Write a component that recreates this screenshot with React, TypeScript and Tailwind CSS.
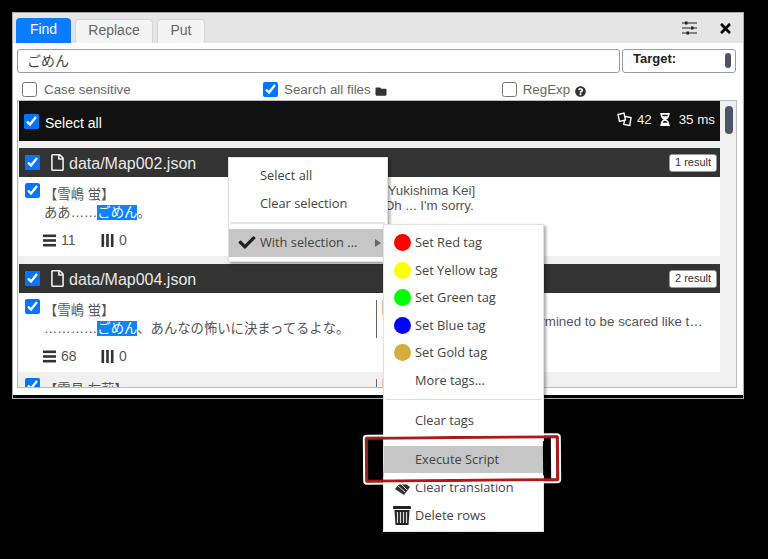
import React from "react";
import { FaCheck, FaFolder, FaHourglassHalf, FaQuestionCircle, FaRegFile, FaTimes } from "react-icons/fa";

const cjk = { fontFamily: '"Liberation Sans","Noto Sans CJK JP",sans-serif' };

function Box({ checked = false }: { checked?: boolean }) {
  return <input type="checkbox" checked={checked} readOnly className="m-0 h-[15px] w-[15px] shrink-0 accent-[#0075ff]" />;
}

function Hit() {
  return <span className="bg-[#0a84ff] text-white">ごめん</span>;
}

function Lines() {
  return (
    <svg width="13" height="13" viewBox="0 0 13 13" fill="#333">
      <rect x="0" y="0.5" width="13" height="2.6" />
      <rect x="0" y="5.2" width="13" height="2.6" />
      <rect x="0" y="9.9" width="13" height="2.6" />
    </svg>
  );
}

function Counts({ lines }: { lines: string }) {
  return (
    <div className="-ml-[1px] mt-[10px] flex h-[16px] items-center text-[14px] text-[#555]">
      <Lines />
      <span className="ml-[5px] w-[40px]">{lines}</span>
      <span className="rotate-90 leading-none"><Lines /></span>
      <span className="ml-[5px]">0</span>
    </div>
  );
}

function FileHeader({ name, count }: { name: string; count: string }) {
  return (
    <div className="flex h-[29px] items-center bg-[#333] pl-[6px] pr-[3px] text-white">
      <Box checked />
      <FaRegFile className="ml-[10px] h-[17px] w-[15px] text-[#eee]" />
      <span className="ml-[4px] mt-[2px] text-[16px] text-[#e8e8e8]">{name}</span>
      <span className="ml-auto flex h-[18px] w-[48px] items-center justify-center rounded-[3px] border border-[#999] bg-white text-[11px] text-[#333]">{count}</span>
    </div>
  );
}

function Row({ text, tr, lines, name = "【雪嶋 蛍】", grey = false }: { text: React.ReactNode; tr: React.ReactNode; lines: string; name?: string; grey?: boolean }) {
  return (
    <div className={`flex h-[79px] pl-[6px] pt-[6px] ${grey ? "bg-[#f0f0f0]" : "bg-white"}`}>
      <Box checked />
      <div className="ml-[4px] w-[332px] shrink-0 text-[13.33px] leading-[18px] text-[#555]" style={cjk}>
        <div className="mt-[3px]">{name}</div>
        <div>{text}</div>
        <Counts lines={lines} />
      </div>
      <div className="mt-[1px] flex h-[38px] w-[6px] shrink-0 border-l border-[#666]">
        <div className="ml-[5px] h-[15px] w-[3px] shrink-0 bg-[#f5c08a]" />
      </div>
      <div className="ml-[2px] w-[322px] truncate text-[13.33px] leading-[15px] text-[#555]" style={cjk}>{tr}</div>
    </div>
  );
}

function MenuItem({ children, icon, active = false, arrow = false }: { children: React.ReactNode; icon?: React.ReactNode; active?: boolean; arrow?: boolean }) {
  return (
    <div className={`relative flex h-[27.5px] items-center pl-[31px] text-[12.8px] text-[#444] ${active ? "bg-[#c6c6c6]" : ""}`}>
      {icon && <span className="absolute left-[8px] flex w-[20px] items-center justify-center">{icon}</span>}
      {children}
      {arrow && <span className="absolute right-[6px] h-0 w-0 border-y-[4px] border-l-[6px] border-y-transparent border-l-[#666]" />}
    </div>
  );
}

function Dot({ color }: { color: string }) {
  return <span className={`h-[17px] w-[17px] rounded-full ${color}`} />;
}

function Trash() {
  return (
    <svg width="18" height="20" viewBox="0 0 18 20" fill="#222">
      <rect x="0" y="1" width="18" height="3" rx="1" />
      <path d="M1.5 5h15l-1 15h-13z" />
      <path d="M4.5 7v11M7.5 7v11M10.5 7v11M13.5 7v11" stroke="#ddd" strokeWidth="1.2" />
    </svg>
  );
}

function Eraser() {
  return (
    <svg width="16" height="14" viewBox="0 0 16 14" fill="#333">
      <path d="M8 0l8 6-6 8-9-6z" />
      <path d="M4 5l7 6M7 3l6 6" stroke="#ccc" strokeWidth="1" />
    </svg>
  );
}

function Cards() {
  return (
    <svg width="15" height="15" viewBox="0 0 15 15" fill="none" stroke="#fff" strokeWidth="1.4">
      <path d="M1 2.5l6-1.5 1.5 7-6 1.5z" />
      <path d="M8 4.5l6 1-1.2 8-6-1 .6-4" />
    </svg>
  );
}

function Sliders() {
  return (
    <svg width="15" height="14" viewBox="0 0 15 14" fill="#222">
      <path d="M0 2h15M0 7h15M0 12h15" stroke="#222" strokeWidth="1" />
      <rect x="3" y="0.5" width="2.5" height="3" />
      <rect x="9" y="5.5" width="2.5" height="3" />
      <rect x="4.5" y="10.5" width="2.5" height="3" />
    </svg>
  );
}

export default function App() {
  return (
    <div className="relative h-[559px] w-[768px] overflow-hidden bg-black pl-[12px] pt-[12px] text-[#555]" style={{ fontFamily: '"Liberation Sans",sans-serif' }}>
      <div className="h-[387px] w-[732px] border border-[#aaa] bg-black">
        <div className="h-[382px] bg-white">
          <div className="flex h-[30px] items-end bg-[#e5e5e5] pl-[3px]">
            <div className="flex h-[25px] w-[55px] items-center justify-center rounded-t-[4px] bg-[#0a7cff] pb-[2px] text-[14px] text-white">Find</div>
            <div className="ml-[4px] flex h-[24px] w-[78px] items-center justify-center self-end rounded-t-[4px] border border-b-0 border-[#d4d4d4] bg-[#f4f4f4] pb-[2px] text-[14px] text-[#666]">Replace</div>
            <div className="ml-[4px] flex h-[24px] w-[48px] items-center justify-center rounded-t-[4px] border border-b-0 border-[#d4d4d4] bg-[#f4f4f4] pb-[2px] text-[14px] text-[#666]">Put</div>
            <div className="ml-auto flex h-[30px] items-center pr-[11px]">
              <Sliders />
              <FaTimes className="ml-[22px] h-[15px] w-[13px] text-black" />
            </div>
          </div>

          <div className="mt-[6px] flex pl-[4px]">
            <div className="flex h-[24px] w-[603px] items-center rounded-[3px] border border-[#999] pl-[9px] text-[14px] text-[#444]" style={cjk}>ごめん</div>
            <div className="relative ml-[2px] h-[24px] w-[114px] overflow-hidden rounded-[3px] border border-[#999] pl-[10px] text-[13px] leading-[18px]">
              <div className="font-bold text-[#222]">Target:</div>
              <div className="ml-[14px] text-[#333]">Data</div>
              <div className="absolute right-[4px] top-[3px] h-[15px] w-[6px] rounded-[3px] bg-[#4b5563]" />
            </div>
          </div>

          <div className="mt-[7px] flex h-[18px] items-center pl-[9px] text-[13.33px] text-[#666]">
            <Box />
            <span className="ml-[7px] mt-[2px] w-[219px]">Case sensitive</span>
            <Box checked />
            <span className="ml-[6px] mt-[2px]">Search all files</span>
            <FaFolder className="ml-[4px] mt-[4px] h-[11px] w-[12px] text-[#333]" />
            <span className="w-[115px]" />
            <Box />
            <span className="ml-[6px] mt-[2px]">RegExp</span>
            <FaQuestionCircle className="ml-[5px] mt-[4px] h-[11px] w-[11px] text-[#333]" />
          </div>

          <div className="ml-[4px] mt-[2px] flex h-[288px] w-[720px] overflow-hidden border border-[#bbb] bg-[#f0f0f0]">
            <div className="w-[702px] shrink-0 pl-[1px]">
              <div className="flex h-[40px] items-center bg-[#111] pl-[5px] pr-[5px] text-[14px] text-white">
                <Box checked />
                <span className="ml-[6px] mt-[5px]">Select all</span>
                <div className="ml-auto flex items-center pb-[3px] text-[13.33px] text-[#eee]">
                  <Cards />
                  <span className="ml-[5px]">42</span>
                  <FaHourglassHalf className="ml-[7px] h-[13px] w-[12px] text-white" />
                  <span className="ml-[8px]">35 ms</span>
                </div>
              </div>
              <div className="h-[7px]" />
              <FileHeader name="data/Map002.json" count="1 result" />
              <Row
                text={<>ああ……<Hit />。</>}
                tr={<>[Yukishima Kei]<br />Oh ... I'm sorry.</>}
                lines="11"
              />
              <div className="h-[8px]" />
              <FileHeader name="data/Map004.json" count="2 result" />
              <Row
                text={<>…………<Hit />、あんなの怖いに決まってるよな。</>}
                tr={<>[Yukishima Kei]<br />...... I'm so sorry, I am determined to be scared like that, of course.</>}
                lines="68"
              />
              <Row grey name="【雪見 友莉】" text="" tr="" lines="0" />
            </div>
            <div className="flex-1 pl-[5px] pt-[5px]">
              <div className="h-[28px] w-[8px] rounded-[4px] bg-[#4b5563]" />
            </div>
          </div>
        </div>
      </div>

      <div className="absolute left-[228px] top-[157px] h-[105px] w-[160px] border border-[#e2e2e2] bg-white pt-[4px] shadow-[2px_2px_3px_rgba(0,0,0,0.35)]" style={{ fontFamily: '"Open Sans",sans-serif' }}>
        <MenuItem>Select all</MenuItem>
        <MenuItem>Clear selection</MenuItem>
        <div className="mx-[2px] mt-[5px] h-[2px] bg-[#e6e6e6]" />
        <div className="mt-[5px]">
          <MenuItem active arrow icon={<FaCheck className="h-[17px] w-[20px] text-[#222]" />}>With selection ...</MenuItem>
        </div>
      </div>

      <div className="absolute left-[383px] top-[224px] h-[308px] w-[161px] border border-[#e2e2e2] bg-white pt-[4px] shadow-[2px_2px_3px_rgba(0,0,0,0.35)]" style={{ fontFamily: '"Open Sans",sans-serif' }}>
        <MenuItem icon={<Dot color="bg-[#ff0000]" />}>Set Red tag</MenuItem>
        <MenuItem icon={<Dot color="bg-[#ffff00]" />}>Set Yellow tag</MenuItem>
        <MenuItem icon={<Dot color="bg-[#00ff00]" />}>Set Green tag</MenuItem>
        <MenuItem icon={<Dot color="bg-[#0000ff]" />}>Set Blue tag</MenuItem>
        <MenuItem icon={<Dot color="bg-[#d4af37]" />}>Set Gold tag</MenuItem>
        <MenuItem>More tags...</MenuItem>
        <div className="mx-[2px] mt-[5px] h-[1px] bg-[#ddd]" />
        <div className="mt-[7px]"><MenuItem>Clear tags</MenuItem></div>
        <div className="mb-[1px] mt-[11px]"><MenuItem active>Execute Script</MenuItem></div>
        <MenuItem icon={<Eraser />}>Clear translation</MenuItem>
        <MenuItem icon={<Trash />}>Delete rows</MenuItem>
      </div>

      <div className="absolute left-[365px] top-[436px] flex h-[46px] w-[194px] -rotate-[0.5deg] justify-between rounded-[2px] border-[3px] border-[#b01818] outline-2 outline-white">
        <div className="my-[3px] ml-[4px] w-[11px] bg-black" />
        <div className="flex">
          <div className="my-[3px] w-[8px] bg-black" />
          <div className="w-[5px] bg-white" />
        </div>
      </div>
    </div>
  );
}
